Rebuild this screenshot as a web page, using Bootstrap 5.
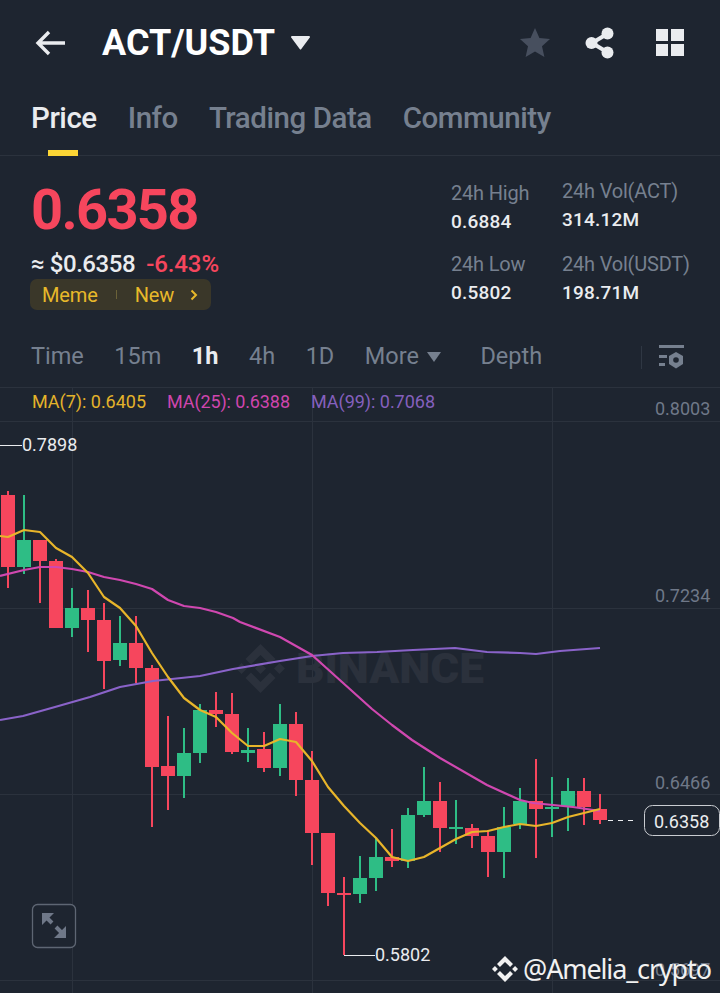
<!doctype html>
<html lang="en"><head><meta charset="utf-8"><title>ACT/USDT</title>
<link href="https://cdn.jsdelivr.net/npm/bootstrap@5.3.0/dist/css/bootstrap.min.css" rel="stylesheet">
<style>
html,body{margin:0;background:#1e2530;width:720px;height:993px;overflow:hidden}
body{font-family:Roboto,"Noto Sans",sans-serif;color:#eaecef}
.top-bar{height:85px;padding:0 36px 0 35px}
.pair-name{font-size:36px;font-weight:700;line-height:1;color:#fff;margin-left:37px;letter-spacing:0}
.pair-caret{margin-left:16px}
.tool-star{margin-right:35px}
.tool-share{margin-right:41px}
.tabs-bar{height:71px;border-bottom:1px solid #2b323d;padding:0 0 0 31px;gap:31px;position:relative}
.tab-item{font-size:29.5px;font-weight:500;line-height:1;color:#76808f;padding-top:19px;letter-spacing:-.45px}
.tab-item.is-on{color:#eaecef}
.tab-mark{position:absolute;left:48px;bottom:-1px;width:30px;height:6px;background:#fcd535}
.price-block{height:175px;padding:0 0 0 31px}
.big-price{font-size:56px;font-weight:700;line-height:1;color:#f6465d;margin-top:26px;letter-spacing:-1.7px}
.fiat-row{font-size:24px;font-weight:500;line-height:1;margin-top:14px;color:#eaecef;letter-spacing:-.45px}
.fiat-change{color:#f6465d;margin-left:11px;letter-spacing:-.1px}
.tag-box{width:181px;height:31px;margin:3px 0 0 -1px;background:#3a3729;border-radius:7px;color:#e8b92a;font-size:20px;padding:0 13px 0 12px;letter-spacing:-.15px}
.tag-sep{width:1px;height:9px;background:#6b6238;margin:0 18px}
.stat-col{width:111px;padding-top:25px}
.stat-col.is-wide{width:158px;padding-top:23px}
.stat-name{font-size:20px;line-height:24px;color:#76808f;letter-spacing:-.2px}
.stat-val{font-size:19px;font-weight:500;line-height:24px;color:#eaecef;margin-top:5px;margin-bottom:18px;letter-spacing:.2px}
.is-wide .stat-val{margin-bottom:20px}
.frames{height:57px;border-bottom:1px solid #2b323d;padding:0 0 4px 31px;color:#76808f;font-size:23.5px;position:relative}
.frame-item{line-height:1;margin-right:30.5px}
.frame-item.is-on{color:#eaecef;font-weight:700}
.frame-depth{margin-left:9px}
.frame-sep{width:1px;height:23px;background:#2f3743;margin-left:auto;margin-right:17px}
.frame-icon{margin-right:36px}
.chart-area{display:block;width:720px;height:605px}
.grid-l{stroke:#2b323d;stroke-width:1}
.wk-r{stroke:#f6465d;stroke-width:2;fill:none}
.wk-g{stroke:#2ebd85;stroke-width:2;fill:none}
.bd-r{fill:#f6465d}.bd-g{fill:#2ebd85}
.ma-line{fill:none;stroke-width:2.2;stroke-linejoin:round}
.ma-y{stroke:#e8b52a}.ma-p{stroke:#d048b0}.ma-v{stroke:#8a63c9}
.lbl{font-family:Roboto,sans-serif;font-size:18px}
.lbl-a{fill:#6f7888}.lbl-w{fill:#eaecef}
.leg-y{fill:#e4b32a}.leg-p{fill:#cf45ad}.leg-v{fill:#8560bd}
.mark-big{font-family:Roboto,sans-serif;font-size:42px;font-weight:900;fill:#2b313c}
.mark-user{font-family:"Noto Sans",sans-serif;font-size:27px;fill:#f1f1f1}
</style></head>
<body>
<header class="top-bar d-flex align-items-center">
  <svg width="30" height="26" viewBox="0 0 30 26" aria-label="Back"><path d="M30 13H3M14 2 3 13l11 11" fill="none" stroke="#eaecef" stroke-width="3.4"/></svg>
  <span class="pair-name">ACT/USDT</span>
  <svg class="pair-caret" width="19" height="14" viewBox="0 0 19 14"><path d="M1 0h17a1 1 0 0 1 .8 1.6l-8.5 11.4a1 1 0 0 1-1.6 0L.2 1.6A1 1 0 0 1 1 0z" fill="#eaecef"/></svg>
  <div class="ms-auto d-flex align-items-center">
    <svg class="tool-star" width="30" height="30" viewBox="0 0 30 30"><path d="M15 0l4.400 10 10.600 1-8 7.200 2.400 10.800L15 23.500 5.600 29 8 18.200 0 11l10.600-1z" fill="#474f5e"/></svg>
    <svg class="tool-share" width="30" height="32" viewBox="0 0 30 32"><path d="M22 7 7 16l15 9" fill="none" stroke="#eaecef" stroke-width="4"/><circle cx="22.500" cy="6.500" r="6" fill="#eaecef"/><circle cx="6.500" cy="16" r="6" fill="#eaecef"/><circle cx="22.500" cy="25.500" r="6" fill="#eaecef"/></svg>
    <svg width="28" height="27" viewBox="0 0 28 27"><path d="M0 0h12v12H0zM15 0h13v12H15zM0 15h12v12H0zM15 15h13v12H15z" fill="#eaecef"/></svg>
  </div>
</header>
<nav class="tabs-bar d-flex align-items-start">
  <span class="tab-item is-on">Price</span><span class="tab-item">Info</span><span class="tab-item">Trading Data</span><span class="tab-item">Community</span>
  <i class="tab-mark"></i>
</nav>
<section class="price-block d-flex">
  <div class="flex-grow-1">
    <div class="big-price">0.6358</div>
    <div class="fiat-row">≈ $0.6358<span class="fiat-change">-6.43%</span></div>
    <div class="tag-box d-flex align-items-center">
      <span>Meme</span><i class="tag-sep"></i><span>New</span>
      <svg class="ms-auto" width="8" height="12" viewBox="0 0 8 12"><path d="M1.500 1.500 6 6l-4.500 4.500" fill="none" stroke="#e8b92a" stroke-width="2"/></svg>
    </div>
  </div>
  <div class="stat-col">
    <div class="stat-name">24h High</div><div class="stat-val">0.6884</div>
    <div class="stat-name">24h Low</div><div class="stat-val">0.5802</div>
  </div>
  <div class="stat-col is-wide">
    <div class="stat-name">24h Vol(ACT)</div><div class="stat-val">314.12M</div>
    <div class="stat-name">24h Vol(USDT)</div><div class="stat-val">198.71M</div>
  </div>
</section>
<div class="frames d-flex align-items-center">
  <span class="frame-item">Time</span><span class="frame-item">15m</span><span class="frame-item is-on">1h</span><span class="frame-item">4h</span><span class="frame-item">1D</span>
  <span class="frame-item d-flex align-items-center">More<svg class="ms-2" width="14" height="10" viewBox="0 0 14 10"><path d="M0 0h14L7 10z" fill="#76808f"/></svg></span>
  <span class="frame-item frame-depth">Depth</span>
  <i class="frame-sep"></i>
  <svg class="frame-icon" width="25" height="24" viewBox="0 0 25 24"><path d="M0 0h25v3H0zM0 10h8v3H0zM0 18h6v3H0z" fill="#76808f"/><path d="M17 7l7 4v8l-7 4.500-7-4.500v-8z" fill="#76808f"/><circle cx="17" cy="15" r="2.800" fill="#1e2530"/></svg>
</div>
<svg class="chart-area" viewBox="0 388 720 605" role="img" aria-label="ACT/USDT candlestick chart">
  <path class="grid-l" d="M0 421.500H720M0 608.500H720M0 794.500H720M0 980.500H720M72.500 388V993M312.500 388V993M552.500 388V993"/>
  <svg x="236" y="644" width="49" height="49" viewBox="0 0 126.610 126.610"><path fill="#2b313c" d="M38.730 53.200l24.590-24.580 24.600 24.600 14.300-14.310L63.320 0 24.420 38.900zM0 63.310l14.300-14.310 14.310 14.310-14.310 14.300zM38.730 73.410l24.590 24.580 24.600-24.600 14.310 14.290-38.910 38.920-38.910-38.880zM98 63.310l14.300-14.310 14.310 14.300-14.310 14.320zM77.830 63.300L63.320 48.780 48.810 63.280l14.510 14.500z"/></svg>
  <text class="mark-big" x="296" y="683" textLength="188" lengthAdjust="spacingAndGlyphs">BINANCE</text>
  <path class="wk-r" d="M8 491V588M40 540V603M56 559V628M88 590V652M104 603V689M136 616V683M152 665V827M168 716V810M216 692V727M232 693V754M264 732V772M296 712V796M312 751V865M328 833V906M344 877V955M392 829V867M440 782V852M472 824V848M488 830V877M536 759V858M584 778V825M600 794V824"/>
  <path class="wk-g" d="M24 495V574M72 588V637M120 616V666M184 728V798M200 704V763M248 728V762M280 704V776M360 856V903M376 838V891M408 808V868M424 767V817M456 800V844M504 807V878M520 788V829M552 777V837M568 778V831"/>
  <path class="bd-r" d="M1 495h14V567h-14zM33 540h14V561h-14zM49 561h14V628h-14zM81 608h14V620h-14zM97 620h14V661h-14zM129 643h14V668h-14zM145 668h14V767h-14zM161 766h14V776h-14zM209 710h14V714h-14zM225 714h14V752h-14zM257 749h14V768h-14zM289 724h14V780h-14zM305 780h14V833h-14zM321 833h14V893h-14zM337 893h14V895h-14zM385 857h14V861h-14zM433 801h14V828h-14zM465 828h14V836h-14zM481 836h14V852h-14zM529 801h14V809h-14zM577 791h14V807h-14zM593 809h14V820h-14z"/>
  <path class="bd-g" d="M17 540h14V567h-14zM65 608h14V628h-14zM113 643h14V660h-14zM177 753h14V776h-14zM193 710h14V753h-14zM241 750h14V753h-14zM273 724h14V768h-14zM353 878h14V894h-14zM369 857h14V878h-14zM401 815h14V861h-14zM417 801h14V815h-14zM449 827h14V829h-14zM497 827h14V852h-14zM513 801h14V824h-14zM545 807h14V809h-14zM561 791h14V806h-14z"/>
  <polyline class="ma-line ma-v" points="0,720 23,716 55,707 90,697 120,687 153,681 200,676 233,669 280,661 312,656 343,653 377,652 413,650 455,648 487,652 520,653 536,654 560,651 600,648"/>
  <polyline class="ma-line ma-p" points="0,576 24,570 40,567 56,567 72,569 88,572 104,577 120,580 136,584 152,589 168,600 184,606 200,608 216,612 233,618 240,622 280,637 312,655 372,709 392,725 412,740 440,758 487,785 520,800 533,803 573,807 600,811"/>
  <polyline class="ma-line ma-y" points="0,536 8,537 24,530 40,532 56,548 72,557 88,573 104,597 120,608 136,626 152,653 168,677 184,698 200,710 216,717 232,733 248,746 264,746 280,739 296,742 312,761 328,787 344,806 360,823 376,838 392,857 408,861 424,857 440,848 456,839 472,832 488,831 504,827 520,824 536,826 552,823 568,817 584,813 600,809"/>
  <g class="lbl">
    <text class="leg-y" x="32" y="408" textLength="114">MA(7): 0.6405</text>
    <text class="leg-p" x="167" y="408" textLength="123">MA(25): 0.6388</text>
    <text class="leg-v" x="311" y="408" textLength="124">MA(99): 0.7068</text>
    <text class="lbl-a" x="655" y="415">0.8003</text>
    <text class="lbl-a" x="655" y="602">0.7234</text>
    <text class="lbl-a" x="655" y="789">0.6466</text>
    <text class="lbl-a" x="655" y="976">0.5697</text>
    <text class="lbl-w" x="22" y="451">0.7898</text>
    <text class="lbl-w" x="375" y="961">0.5802</text>
  </g>
  <path d="M0 445.500H22M344 955.500H375" stroke="#eaecef" fill="none"/>
  <path d="M608 820.500H636" stroke="#eaecef" stroke-dasharray="5 5" fill="none"/>
  <rect x="644.500" y="805.500" width="75" height="30" rx="8" fill="#1e2530" stroke="#c9ccd1"/>
  <text class="lbl lbl-w" x="654" y="828">0.6358</text>
  <rect x="32.500" y="904.500" width="43" height="43" rx="5" fill="#1e2530" stroke="#5e6673" stroke-width="1.300"/>
  <path d="M42 913h12L42 925zM66 938H54l12-12z" fill="#6f7888"/><path d="M46 917l6 6M56 927l6 6" stroke="#6f7888" stroke-width="4"/>
  <svg x="492" y="956" width="26" height="26" viewBox="0 0 126.610 126.610"><path fill="#f1f1f1" d="M38.730 53.200l24.590-24.580 24.600 24.600 14.300-14.310L63.320 0 24.420 38.900zM0 63.310l14.300-14.310 14.310 14.310-14.310 14.300zM38.730 73.410l24.590 24.580 24.600-24.600 14.310 14.290-38.910 38.920-38.910-38.880zM98 63.310l14.300-14.310 14.310 14.300-14.310 14.320z"/></svg>
  <text class="mark-user" x="523" y="979" textLength="189">@Amelia_crypto</text>
</svg>
</body></html>
